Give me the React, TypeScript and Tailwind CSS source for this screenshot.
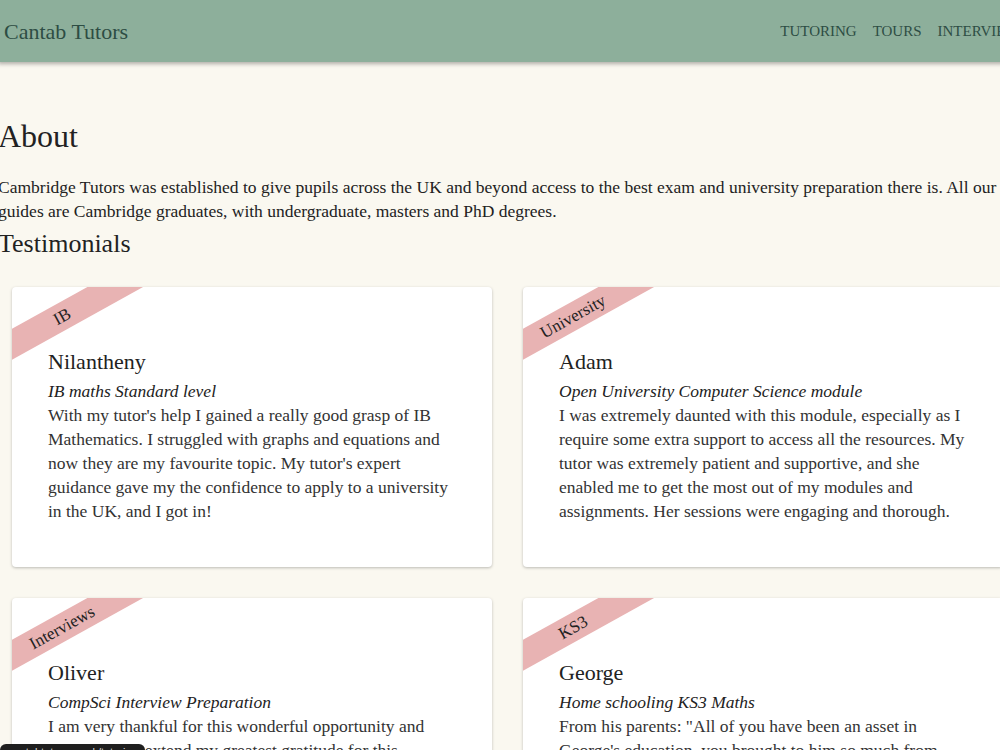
import React from "react";

type Testimonial = {
  tag: string;
  name: string;
  course: string;
  text: string;
};

const testimonials: Testimonial[] = [
  {
    tag: "IB",
    name: "Nilantheny",
    course: "IB maths Standard level",
    text: "With my tutor's help I gained a really good grasp of IB Mathematics. I struggled with graphs and equations and now they are my favourite topic. My tutor's expert guidance gave my the confidence to apply to a university in the UK, and I got in!",
  },
  {
    tag: "University",
    name: "Adam",
    course: "Open University Computer Science module",
    text: "I was extremely daunted with this module, especially as I require some extra support to access all the resources. My tutor was extremely patient and supportive, and she enabled me to get the most out of my modules and assignments. Her sessions were engaging and thorough.",
  },
  {
    tag: "Interviews",
    name: "Oliver",
    course: "CompSci Interview Preparation",
    text: "I am very thankful for this wonderful opportunity and would like to extend my greatest gratitude for this amazing preparation and support.",
  },
  {
    tag: "KS3",
    name: "George",
    course: "Home schooling KS3 Maths",
    text: "From his parents: \"All of you have been an asset in George's education, you brought to him so much from your knowledge and experience.\"",
  },
];

function Card({ t }: { t: Testimonial }) {
  return (
    <div className="relative overflow-hidden rounded-[4px] bg-white shadow-[0_1px_3px_rgba(0,0,0,0.25)] h-[280px] px-9 pt-[60px]">
      <div className="absolute left-[-50px] top-[16px] w-[200px] h-[27px] -rotate-[29deg] bg-[#e8b3b3] flex items-center justify-center text-[17px] text-[#222]">
        {t.tag}
      </div>
      <h3 className="text-[22px] leading-[30px] text-[#222]">{t.name}</h3>
      <p className="italic text-[17.5px] leading-[24px] text-[#222] mt-[2px]">{t.course}</p>
      <p className="text-[17.5px] leading-[24px] text-[#333]">{t.text}</p>
    </div>
  );
}

export default function App() {
  return (
    <div className="w-full h-[750px] overflow-hidden bg-[#faf8f0] relative font-['Liberation_Serif',serif]">
      <div className="w-[1030px] -ml-[2px]">
        <header className="h-[62px] bg-[#8daf9b] shadow-[0_2px_4px_rgba(0,0,0,0.3)] flex items-center pl-[6px]">
          <span className="text-[22px] text-[#2d4d44]">Cantab Tutors</span>
          <nav className="ml-auto flex gap-4 text-[15px] text-[#2d4d44]">
            <a>TUTORING</a>
            <a>TOURS</a>
            <a>INTERVIEWS</a>
          </nav>
        </header>
        <main className="pt-[54px]">
          <h1 className="text-[32px] leading-[40px] text-[#222]">About</h1>
          <p className="mt-[19px] text-[17.5px] leading-[24px] text-[#222] w-[1010px]">
            Cambridge Tutors was established to give pupils across the UK and beyond access to the best exam and university preparation there is. All our guides are Cambridge graduates, with undergraduate, masters and PhD degrees.
          </p>
          <h2 className="text-[26px] leading-[32px] text-[#222] mt-[5px]">Testimonials</h2>
          <div className="grid grid-cols-[480px_480px] gap-x-[31px] gap-y-[31px] pl-[14px] mt-[27px]">
            {testimonials.map((t) => (
              <Card key={t.name} t={t} />
            ))}
          </div>
        </main>
      </div>
      <div className="absolute left-0 bottom-[-18px] w-[145px] h-[24px] rounded-[6px] bg-[#1f1f1f] text-[11px] text-[#ddd] px-2 font-['Liberation_Sans',sans-serif]">
        cantabtutors.co.uk/tutoring
      </div>
    </div>
  );
}
